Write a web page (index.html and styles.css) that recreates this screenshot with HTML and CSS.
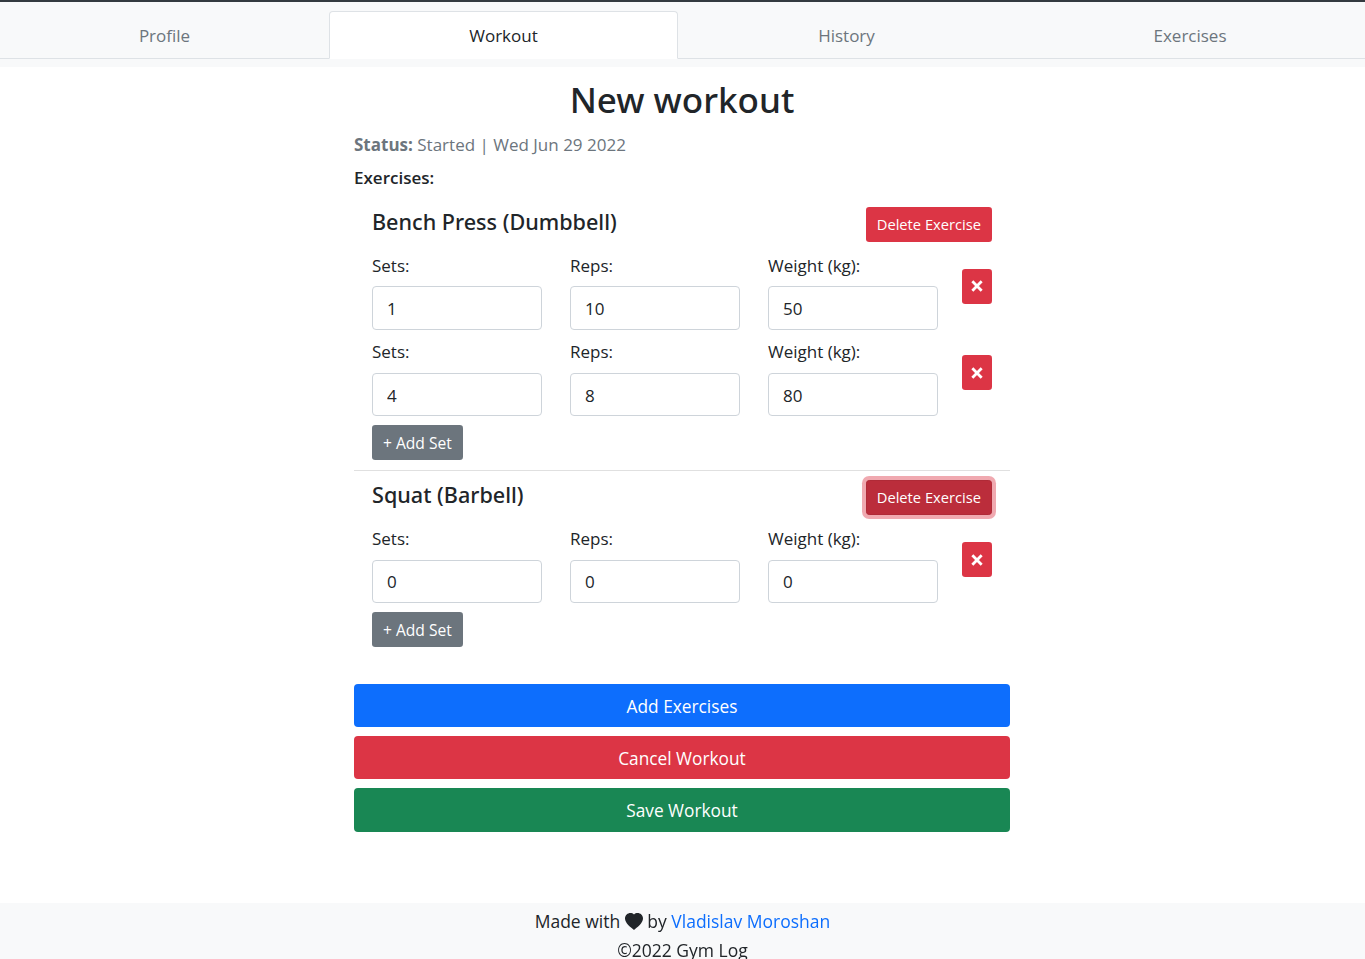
FILE: index.html
```html
<!DOCTYPE html>
<html lang="en">
<head>
<meta charset="utf-8">
<title>Gym Log</title>
<link rel="stylesheet" href="styles.css">
</head>
<body>
<header class="topbar">
  <nav class="tabs">
    <a class="tab" href="#">Profile</a>
    <a class="tab active" href="#">Workout</a>
    <a class="tab" href="#">History</a>
    <a class="tab" href="#">Exercises</a>
  </nav>
</header>
<main class="page">
  <h1 class="title">New workout</h1>
  <p class="status"><strong>Status:</strong> Started | Wed Jun 29 2022</p>
  <p class="section-label">Exercises:</p>

  <section class="exercise">
    <div class="exercise-head">
      <h2 class="exercise-name">Bench Press (Dumbbell)</h2>
      <button class="btn-small danger">Delete Exercise</button>
    </div>
    <div class="set-row">
      <div class="fields">
        <div class="field"><label class="field-label">Sets:</label><input class="input" value="1"></div>
        <div class="field"><label class="field-label">Reps:</label><input class="input" value="10"></div>
        <div class="field"><label class="field-label">Weight (kg):</label><input class="input" value="50"></div>
      </div>
      <button class="btn-small danger remove" aria-label="Remove set"><svg class="x-icon" viewBox="0 0 12 12"><path d="M2 2l8 8M10 2l-8 8"/></svg></button>
    </div>
    <div class="set-row">
      <div class="fields">
        <div class="field"><label class="field-label">Sets:</label><input class="input" value="4"></div>
        <div class="field"><label class="field-label">Reps:</label><input class="input" value="8"></div>
        <div class="field"><label class="field-label">Weight (kg):</label><input class="input" value="80"></div>
      </div>
      <button class="btn-small danger remove" aria-label="Remove set"><svg class="x-icon" viewBox="0 0 12 12"><path d="M2 2l8 8M10 2l-8 8"/></svg></button>
    </div>
    <button class="btn-small secondary">+ Add Set</button>
  </section>

  <hr class="divider">

  <section class="exercise">
    <div class="exercise-head">
      <h2 class="exercise-name">Squat (Barbell)</h2>
      <button class="btn-small danger focused">Delete Exercise</button>
    </div>
    <div class="set-row">
      <div class="fields">
        <div class="field"><label class="field-label">Sets:</label><input class="input" value="0"></div>
        <div class="field"><label class="field-label">Reps:</label><input class="input" value="0"></div>
        <div class="field"><label class="field-label">Weight (kg):</label><input class="input" value="0"></div>
      </div>
      <button class="btn-small danger remove" aria-label="Remove set"><svg class="x-icon" viewBox="0 0 12 12"><path d="M2 2l8 8M10 2l-8 8"/></svg></button>
    </div>
    <button class="btn-small secondary">+ Add Set</button>
  </section>

  <div class="actions">
    <button class="btn-wide primary">Add Exercises</button>
    <button class="btn-wide danger">Cancel Workout</button>
    <button class="btn-wide success">Save Workout</button>
  </div>
</main>
<footer class="footer">
  <div>Made with <svg class="heart" viewBox="0 0 16 16"><path d="M8 1.314C12.438-3.248 23.534 4.735 8 15-7.534 4.736 3.562-3.248 8 1.314z"/></svg> by <a class="author" href="#">Vladislav Moroshan</a></div>
  <div class="copyright">©2022 Gym Log</div>
</footer>
</body>
</html>
```
FILE: styles.css
```css
html, body {
  margin: 0;
  height: 959px;
  overflow: hidden;
}
body {
  font-family: "Open Sans", "Noto Sans", sans-serif;
  font-size: 17px;
  line-height: 28.8px;
  color: #212529;
  background: #fff;
}
.topbar {
  border-top: 2px solid #343a40;
  background: #f8f9fa;
  padding: 9px 0 8px;
}
.tabs {
  display: grid;
  grid-template-columns: 329fr 349fr 337fr 350fr;
  border-bottom: 1px solid #dee2e6;
  height: 47px;
}
.tab {
  text-align: center;
  text-decoration: none;
  color: #6c757d;
  padding-top: 10px;
  border: 1px solid transparent;
  border-radius: 4px 4px 0 0;
  margin-bottom: -1px;
}
.tab.active {
  color: #212529;
  background: #fff;
  border-color: #dee2e6 #dee2e6 #fff;
}
.page {
  width: 656px;
  margin-left: calc(50% - 328.5px);
}
.title {
  margin: 8px 0 0;
  height: 50px;
  line-height: 50px;
  font-family: "Noto Sans", sans-serif;
  font-size: 35px;
  font-weight: 500;
  text-align: center;
}
.status {
  margin: 6px 0 0;
  color: #6c757d;
}
.status strong {
  font-weight: 700;
}
.section-label {
  margin: 4px 0 14.4px;
  font-weight: 600;
}
.exercise {
  padding-left: 18px;
  width: 620px;
}
.exercise-head {
  display: flex;
  justify-content: space-between;
  align-items: center;
}
.exercise-name {
  margin: 0;
  font-family: "Noto Sans", sans-serif;
  font-size: 21.6px;
  font-weight: 500;
  line-height: 30px;
  position: relative;
  top: -2.4px;
}
.set-row {
  display: flex;
  justify-content: space-between;
  margin-bottom: 8.6px;
}
.exercise-head + .set-row {
  margin-top: 9.6px;
}
.fields {
  display: flex;
  gap: 28px;
}
.field {
  width: 170px;
}
.field-label {
  display: block;
  margin-bottom: 6px;
}
.input {
  display: block;
  box-sizing: border-box;
  width: 100%;
  height: 43.2px;
  padding: 1px 14px 0;
  border: 1px solid #ced4da;
  border-radius: 4px;
  font: inherit;
  color: #212529;
}
.btn-small {
  box-sizing: border-box;
  display: block;
  height: 35px;
  padding: 0 10px;
  border: 1px solid transparent;
  border-radius: 3.2px;
  font-family: inherit;
  font-size: 14.7px;
  line-height: 33px;
  color: #fff;
}
.remove {
  width: 30px;
  padding: 0;
  margin-top: 17.2px;
}
.x-icon {
  display: block;
  width: 14px;
  height: 14px;
  margin: 0 auto;
  fill: none;
  stroke: #fff;
  stroke-width: 2.4;
}
.danger {
  background: #dc3545;
  color: #fff;
}
.secondary {
  background: #6c757d;
  font-size: 15.6px;
  padding-top: 1px;
}
.focused {
  background: #bb2d3b;
  border-color: #b02a37;
  box-shadow: 0 0 0 4px rgba(225, 83, 97, .5);
}
.divider {
  margin: 10px 0 9.6px;
  border: 0;
  border-top: 1px solid #e0e0e0;
}
.actions {
  display: flex;
  flex-direction: column;
  gap: 9px;
  margin-top: 37.45px;
}
.btn-wide {
  height: 43.2px;
  padding: 2px 0 0;
  border: 0;
  border-radius: 4px;
  font-family: inherit;
  font-size: 17.3px;
  color: #fff;
}
.primary {
  background: #0d6efd;
}
.success {
  background: #198754;
}
.footer {
  position: fixed;
  left: 0;
  right: 0;
  top: 903px;
  height: 56px;
  padding-top: 4px;
  box-sizing: border-box;
  background: #f8f9fa;
  font-size: 17.5px;
  text-align: center;
}
.copyright {
  margin-top: 5px;
  line-height: 18px;
}
.heart {
  width: 18px;
  height: 18px;
  vertical-align: -3px;
  fill: #212529;
}
.author {
  color: #0d6efd;
  text-decoration: none;
}
```
